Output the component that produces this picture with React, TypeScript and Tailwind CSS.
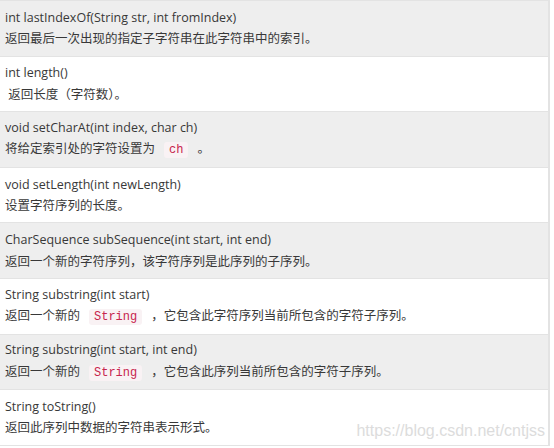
const Code = ({ children }: { children: string }) => (
    <code className="mx-[9px] rounded-[3px] bg-[#f9f2f4] px-[5px] py-[1px] font-['Liberation_Mono',monospace] text-[12px] text-[#c7254e]">
        {children}
    </code>
);

type Row = { sig: string; desc: React.ReactNode };

const rows: Row[] = [
    { sig: 'int lastIndexOf(String str, int fromIndex)', desc: '返回最后一次出现的指定子字符串在此字符串中的索引。' },
    { sig: 'int length()', desc: '\u00a0返回长度（字符数）。' },
    { sig: 'void setCharAt(int index, char ch)', desc: <>将给定索引处的字符设置为<Code>ch</Code>。</> },
    { sig: 'void setLength(int newLength)', desc: '设置字符序列的长度。' },
    { sig: 'CharSequence subSequence(int start, int end)', desc: '返回一个新的字符序列，该字符序列是此序列的子序列。' },
    { sig: 'String substring(int start)', desc: <>返回一个新的<Code>String</Code>，它包含此字符序列当前所包含的字符子序列。</> },
    { sig: 'String substring(int start, int end)', desc: <>返回一个新的<Code>String</Code>，它包含此序列当前所包含的字符子序列。</> },
    { sig: 'String toString()', desc: '返回此序列中数据的字符串表示形式。' },
];

export default function App() {
    return (
        <div className="h-[448px] w-[554px] bg-white">
            <div className="relative w-[550px] border-t border-r-2 border-[#e3e3e3] font-['Open_Sans','Noto_Sans_CJK_SC',sans-serif] text-[12.5px] text-[#383838]">
                {rows.map((r, i) => (
                    <div
                        key={i}
                        className={`flex h-[55.6px] flex-col justify-center border-b border-[#e3e3e3] pl-[5px] leading-[21.5px] ${i % 2 === 0 ? 'bg-[#eeeeee]' : 'bg-white'}`}
                    >
                        <p>{r.sig}</p>
                        <p>{r.desc}</p>
                    </div>
                ))}
                <span className="absolute right-[3px] bottom-[3px] font-['Liberation_Sans',sans-serif] text-[16px] text-[#dcdcdc]">
                    https://blog.csdn.net/cntjss
                </span>
            </div>
        </div>
    );
}
